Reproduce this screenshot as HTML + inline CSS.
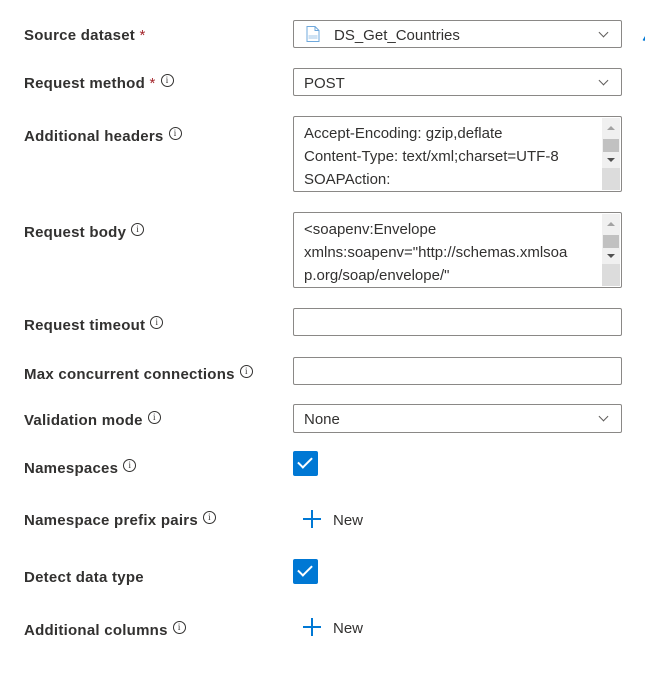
<!DOCTYPE html>
<html><head><style>
body{margin:0;width:645px;height:692px;background:#fff;font-family:"Liberation Sans",sans-serif;position:relative;overflow:hidden}
.l{position:absolute;left:24px;font-size:15px;font-weight:bold;color:#323130;line-height:20px;transform:translateY(-50%);margin-top:2px;letter-spacing:0.25px}
.l .s{color:#a4262c;font-weight:normal}
.i{display:inline-block;width:11px;height:11px;border:1px solid #323130;border-radius:50%;font-size:9px;line-height:11px;text-align:center;font-weight:normal;vertical-align:5px;margin-left:5px;font-family:"Liberation Serif",serif;letter-spacing:0}
.b{position:absolute;left:293px;width:329px;border:1px solid #8a8886;border-radius:2px;box-sizing:border-box;font-size:15px;color:#323130}
.d{height:28px;line-height:29px;padding-left:10px}
.d:after{content:"";position:absolute;right:14px;top:8px;width:6px;height:6px;border-right:1px solid #605e5c;border-bottom:1px solid #605e5c;transform:rotate(45deg)}
.t{height:76px;padding:5px 30px 0 10px;line-height:23px;overflow:hidden;white-space:nowrap}
.sb{position:absolute;right:1px;top:1px;width:18px;bottom:1px;background:#f0f0f0}
.sb .th{position:absolute;left:1px;width:16px;top:21px;height:13px;background:#c1c1c1}
.sb .up{position:absolute;left:5px;top:8px;border:4px solid transparent;border-bottom:4px solid #a3a3a3;border-top:0}
.sb .dn{position:absolute;left:5px;top:40px;border:4px solid transparent;border-top:4px solid #505050;border-bottom:0}
.sb .rz{position:absolute;left:0;right:0;bottom:0;height:22px;background:#dcdcdc}
.c{position:absolute;left:293px;width:25px;height:25px;background:#0078d4;border-radius:2px}
.c:after{content:"";position:absolute;left:8px;top:3px;width:6px;height:12px;border-right:2px solid #fff;border-bottom:2px solid #fff;transform:rotate(45deg)}
.n{position:absolute;left:303px;font-size:15px;color:#323130;line-height:20px}
.n span{display:inline-block;position:relative;width:18px;height:18px;vertical-align:-3px;margin-right:12px}
.n span:before{content:"";position:absolute;left:8px;top:0;width:1.5px;height:18px;background:#0078d4}
.n span:after{content:"";position:absolute;top:8px;left:0;height:1.5px;width:18px;background:#0078d4}
</style></head><body>
<div class="l" style="top:34px">Source dataset <span class="s">*</span></div>
<div class="l" style="top:82px">Request method <span class="s">*</span><span class="i">i</span></div>
<div class="l" style="top:135px">Additional headers<span class="i">i</span></div>
<div class="l" style="top:231px">Request body<span class="i">i</span></div>
<div class="l" style="top:324px">Request timeout<span class="i">i</span></div>
<div class="l" style="top:373px">Max concurrent connections<span class="i">i</span></div>
<div class="l" style="top:419px">Validation mode<span class="i">i</span></div>
<div class="l" style="top:467px">Namespaces<span class="i">i</span></div>
<div class="l" style="top:519px">Namespace prefix pairs<span class="i">i</span></div>
<div class="l" style="top:576px">Detect data type</div>
<div class="l" style="top:629px">Additional columns<span class="i">i</span></div>

<div class="b d" style="top:20px;padding-left:40px"><svg style="position:absolute;left:12px;top:5px" width="14" height="16" viewBox="0 0 14 16"><path d="M1 .5h8l4 4V15.5H1z" fill="#fff" stroke="#6fa8dc"/><path d="M9 .5v4h4" fill="none" stroke="#6fa8dc"/><rect x="2.5" y="9" width="9" height="4" fill="#cfe2f3"/></svg>DS_Get_Countries</div>
<div style="position:absolute;left:642px;top:33px;width:3px;height:9px;overflow:hidden"><div style="width:6px;height:2px;background:#0078d4;transform:rotate(-60deg);margin-top:4px"></div></div>
<div class="b d" style="top:68px">POST</div>
<div class="b t" style="top:116px">Accept-Encoding: gzip,deflate<br>Content-Type: text/xml;charset=UTF-8<br>SOAPAction:<div class="sb"><div class="up"></div><div class="th"></div><div class="dn"></div><div class="rz"></div></div></div>
<div class="b t" style="top:212px">&lt;soapenv:Envelope<br>xmlns:soapenv="http://schemas.xmlsoa<br>p.org/soap/envelope/"<div class="sb"><div class="up"></div><div class="th"></div><div class="dn"></div><div class="rz"></div></div></div>
<div class="b" style="top:308px;height:28px"></div>
<div class="b" style="top:357px;height:28px"></div>
<div class="b d" style="top:404px;height:29px">None</div>
<div class="c" style="top:451px"></div>
<div class="n" style="top:510px"><span></span>New</div>
<div class="c" style="top:559px"></div>
<div class="n" style="top:618px"><span></span>New</div>
</body></html>
